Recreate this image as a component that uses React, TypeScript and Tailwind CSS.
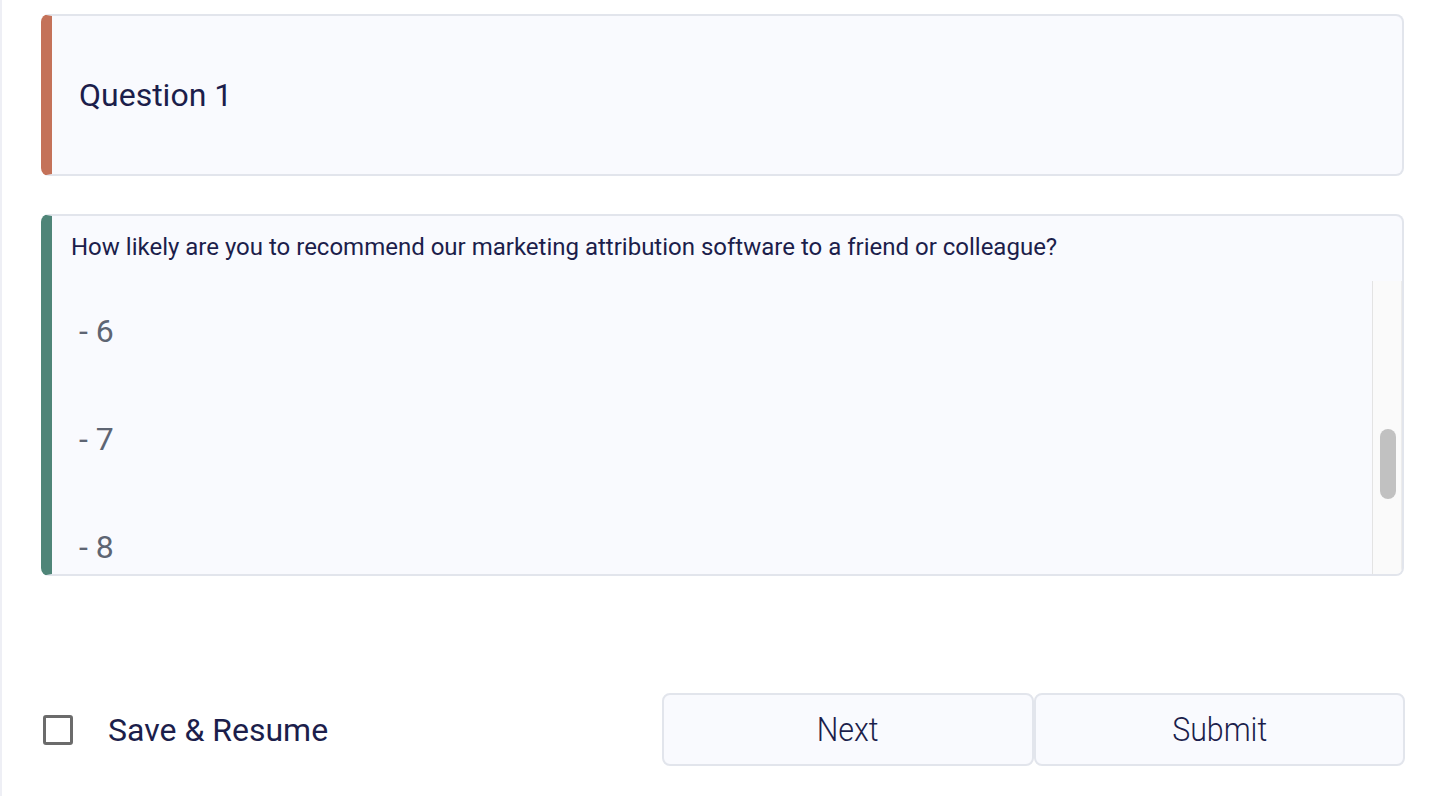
import React from "react";

export default function App() {
  const font = { fontFamily: "Roboto, 'Noto Sans', sans-serif" };
  return (
    <div
      className="w-full h-[796px] bg-white border-l-2 border-[#eeeff5] overflow-hidden"
      style={font}
    >
      <div className="pl-[39px] pr-[26px] pt-[14px] flex flex-col">
        {/* Card 1 */}
        <div className="h-[162px] rounded-[8px] border-2 border-[#e2e5ec] border-l-[11px] border-l-[#c47259] bg-[#f9fafe] flex items-center pl-[27px]">
          <span className="text-[32px] text-[#1c1e4b] leading-none">Question 1</span>
        </div>

        {/* Card 2 */}
        <div className="mt-[38px] h-[362px] rounded-[8px] border-2 border-[#e2e5ec] border-l-[11px] border-l-[#4f8578] bg-[#f9fafe] flex flex-col overflow-hidden">
          <div className="h-[65px] pl-[19px] pt-[17px] shrink-0">
            <span className="text-[24px] text-[#1c1e4b] leading-[28px]">
              How likely are you to recommend our marketing attribution software to a friend or colleague?
            </span>
          </div>
          <div className="flex flex-1 min-h-0">
            <div className="flex-1 overflow-hidden flex flex-col">
              <div className="flex flex-col mt-[-4px]">
                {["6", "7", "8"].map((n) => (
                  <div key={n} className="h-[108px] shrink-0 flex items-center pl-[27px]">
                    <span className="text-[32px] text-[#5e6573] leading-none">- {n}</span>
                  </div>
                ))}
              </div>
            </div>
            <div className="w-[30px] shrink-0 border-l border-[#e3e3e3] bg-[#fafafa] border-r border-r-[#ececec] pt-[148px] pl-[7px]">
              <div className="w-[16px] h-[70px] rounded-full bg-[#c1c1c1]" />
            </div>
          </div>
        </div>

        {/* Bottom row */}
        <div className="mt-[117px] flex items-center">
          <div className="w-[30px] h-[30px] ml-[2px] border-[3px] border-[#6b6b6b] rounded-[3px] bg-white" />
          <span className="ml-[35px] text-[32px] text-[#1c1e4b] leading-none">Save &amp; Resume</span>
          <div className="ml-auto mr-[-1px] flex">
            <button className="w-[372px] h-[73px] rounded-[8px] border-2 border-[#e2e5ec] bg-[#f9fafe] text-[#1c1e4b] flex items-center justify-center">
              <span className="inline-block text-[33px] font-light leading-none scale-x-[0.92]">Next</span>
            </button>
            <button className="w-[371px] h-[73px] rounded-[8px] border-2 border-[#e2e5ec] bg-[#f9fafe] text-[#1c1e4b] flex items-center justify-center">
              <span className="inline-block text-[33px] font-light leading-none scale-x-[0.92]">Submit</span>
            </button>
          </div>
        </div>
      </div>
    </div>
  );
}
